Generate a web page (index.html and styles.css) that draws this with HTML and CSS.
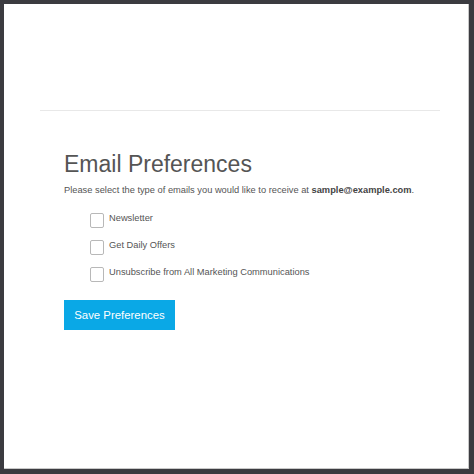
FILE: index.html
```html
<!DOCTYPE html>
<html>
<head>
<meta charset="utf-8">
<link rel="stylesheet" href="styles.css">
</head>
<body>
<div class="frame">
  <div class="page">
    <hr class="rule">
    <div class="content">
      <h1 class="title">Email Preferences</h1>
      <p class="intro">Please select the type of emails you would like to receive at <b>sample@example.com</b>.</p>
      <ul class="options">
        <li class="option"><span class="box"></span><span class="label">Newsletter</span></li>
        <li class="option"><span class="box"></span><span class="label">Get Daily Offers</span></li>
        <li class="option"><span class="box"></span><span class="label">Unsubscribe from All Marketing Communications</span></li>
      </ul>
      <button class="save">Save Preferences</button>
    </div>
  </div>
</div>
</body>
</html>
```
FILE: styles.css
```css
html, body { margin: 0; padding: 0; }
body {
  width: 474px; height: 474px;
  background: #3b3b40;
  font-family: "Liberation Sans", Arial, sans-serif;
}
.frame {
  box-sizing: border-box;
  width: 474px; height: 474px;
  padding: 4px 5px 5px 4px;
}
.page {
  box-sizing: border-box;
  height: 100%;
  background: #fff;
  border-right: 1px solid #c8c8c8;
  border-bottom: 1px solid #c8c8c8;
  padding-top: 106px;
}
.rule {
  margin: 0 0 0 36px;
  width: 400px;
  height: 1px;
  border: 0;
  background: #e8e8e8;
}
.content { padding: 0 0 0 60px; }
.title {
  margin: 38px 0 0 0;
  font-weight: normal;
  font-size: 23px;
  line-height: 30px;
  color: #555;
}
.intro {
  margin: 4px 0 0 0;
  font-size: 9.3px;
  line-height: 14px;
  color: #555;
}
.intro b { color: #444; }
.options {
  list-style: none;
  margin: 16px 0 0 26px;
  padding: 0;
  display: flex;
  flex-direction: column;
  gap: 12px;
}
.option {
  display: flex;
  align-items: flex-start;
  gap: 5px;
  height: 15px;
}
.box {
  box-sizing: border-box;
  width: 14px; height: 15px;
  border: 1px solid #b8b8b8;
  border-radius: 2px;
  background: #fff;
}
.label {
  font-size: 9.3px;
  line-height: 12px;
  color: #555;
  margin-top: -1px;
}
.save {
  margin-top: 18px;
  width: 111px;
  height: 30px;
  border: 0;
  background: #0aa8e6;
  color: #fff;
  font-family: "Liberation Sans", Arial, sans-serif;
  font-size: 11.4px;
  padding: 0;
}
```
